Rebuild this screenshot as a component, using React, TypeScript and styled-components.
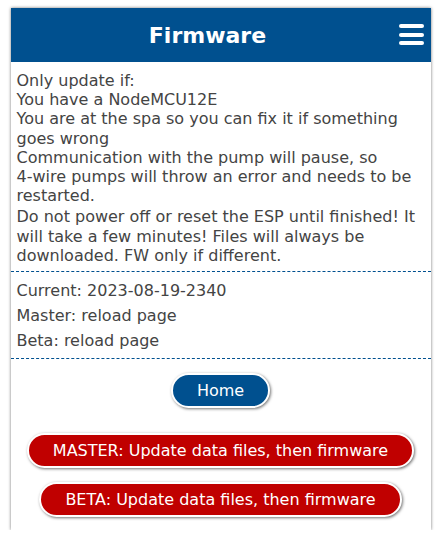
import styled, { createGlobalStyle } from "styled-components";

const GlobalStyle = createGlobalStyle`
  html, body {
    margin: 0;
    padding: 0;
    background: #ffffff;
  }
  body {
    font-family: "DejaVu Sans", Verdana, sans-serif;
    font-size: 16px;
    color: #444444;
  }
`;

const Page = styled.div`
  padding-top: 8px;
  display: flex;
  justify-content: center;
`;

const Card = styled.div`
  width: 420px;
  background: #ffffff;
  box-shadow: 0 0 3px rgba(0, 0, 0, 0.55);
`;

const Header = styled.header`
  height: 54px;
  background: #00508f;
  display: flex;
  align-items: center;
  padding-right: 7px;
`;

const Title = styled.h1`
  flex: 1;
  margin: 0;
  padding-left: 6px;
  text-align: center;
  color: #ffffff;
  font-size: 22px;
  font-weight: bold;
`;

const MenuButton = styled.div`
  width: 25px;
  display: flex;
  flex-direction: column;
  gap: 4.5px;
  margin-top: -1px;
`;

const MenuBar = styled.span`
  display: block;
  height: 4px;
  border-radius: 2px;
  background: #ffffff;
`;

const Section = styled.section<{ $pt: number; $pb: number }>`
  padding: ${(p) => p.$pt}px 6px ${(p) => p.$pb}px;
  border-bottom: 1px dashed #00508f;
`;

const Para = styled.p`
  margin: 0;
  line-height: 19.2px;
  & + & {
    margin-top: 2px;
  }
`;

const InfoRow = styled.div`
  line-height: 19px;
  padding: 3px 0;
`;

const Actions = styled.div`
  display: flex;
  flex-direction: column;
  align-items: center;
  gap: 14px;
  padding: 14px 0 13px;
`;

const Button = styled.button<{ $color: string; $after?: number }>`
  font-family: "DejaVu Sans", Verdana, sans-serif;
  font-size: 16px;
  line-height: 19px;
  color: #ffffff;
  background: ${(p) => p.$color};
  border: 2px solid #ffffff;
  border-radius: 20px;
  padding: 6px 24px;
  box-shadow: 1px 1px 3px rgba(0, 0, 0, 0.55);
  margin-bottom: ${(p) => p.$after ?? 0}px;
  cursor: pointer;
`;

export default function App() {
  return (
    <>
      <GlobalStyle />
      <Page>
        <Card>
          <Header>
            <Title>Firmware</Title>
            <MenuButton>
              <MenuBar />
              <MenuBar />
              <MenuBar />
            </MenuButton>
          </Header>
          <Section $pt={9} $pb={6}>
            <Para>
              Only update if:
              <br />
              You have a NodeMCU12E
              <br />
              You are at the spa so you can fix it if something goes wrong
              <br />
              Communication with the pump will pause, so
              <br />
              4-wire pumps will throw an error and needs to be restarted.
            </Para>
            <Para>
              Do not power off or reset the ESP until finished! It will take a
              few minutes! Files will always be downloaded. FW only if
              different.
            </Para>
          </Section>
          <Section $pt={6} $pb={5}>
            <InfoRow>Current: 2023-08-19-2340</InfoRow>
            <InfoRow>Master: reload page</InfoRow>
            <InfoRow>Beta: reload page</InfoRow>
          </Section>
          <Actions>
            <Button $color="#00508f" $after={11}>
              Home
            </Button>
            <Button $color="#c00000">MASTER: Update data files, then firmware</Button>
            <Button $color="#c00000">BETA: Update data files, then firmware</Button>
          </Actions>
        </Card>
      </Page>
    </>
  );
}
